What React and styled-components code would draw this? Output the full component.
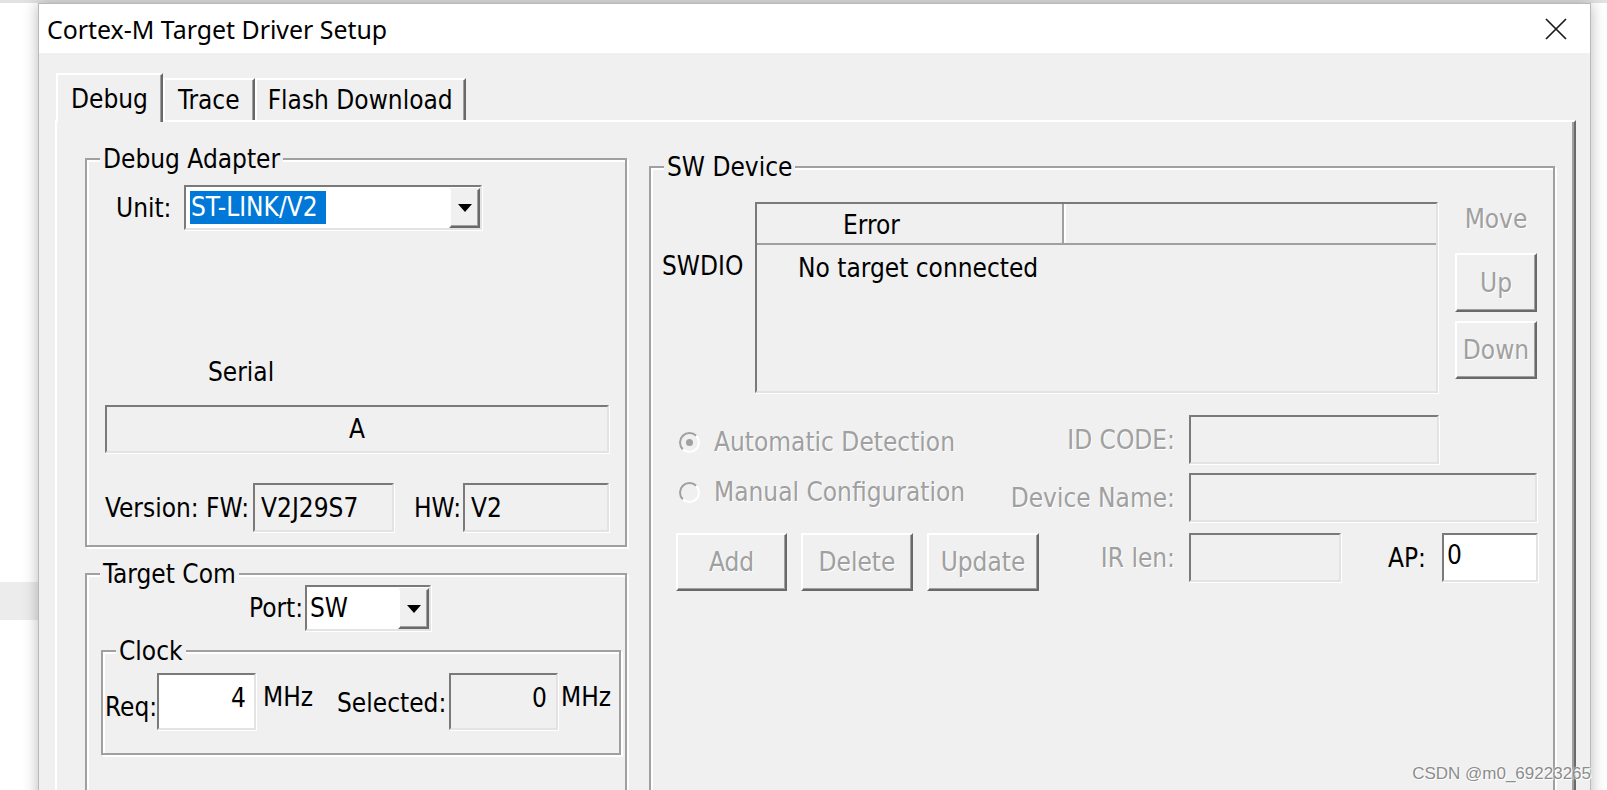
import styled, { createGlobalStyle } from "styled-components";

const GlobalStyle = createGlobalStyle`
  *, *::before, *::after { box-sizing: border-box; }
  html, body { margin: 0; padding: 0; overflow: hidden; background: #fff; }
  body {
    font-family: "DejaVu Sans Condensed", "DejaVu Sans", Tahoma, sans-serif;
    font-stretch: condensed;
    font-size: 26px;
    line-height: 30px;
    color: #000;
  }
`;

const Desktop = styled.div`
  position: relative;
  width: 1607px;
  height: 790px;
  overflow: hidden;
  padding: 3px 0 0 38px;
  background: linear-gradient(#e2e2e2 0 3px, #fff 3px);
  &::before {
    content: "";
    position: absolute;
    left: 0;
    top: 582px;
    width: 38px;
    height: 38px;
    background: #ececec;
  }
`;

const Window = styled.div`
  position: relative;
  width: 1553px;
  height: 880px;
  display: flex;
  flex-direction: column;
  background: #f0f0f0;
  border: 1px solid #b9b9b9;
  box-shadow: 0 0 14px rgba(0, 0, 0, 0.28);
`;

const TitleBar = styled.div`
  flex: none;
  height: 49px;
  display: flex;
  align-items: center;
  justify-content: space-between;
  padding: 0 23px 0 8px;
  background: #fff;
`;

const Title = styled.div`
  font-family: "Noto Sans", "Open Sans", sans-serif;
  font-stretch: normal;
  font-size: 24.9px;
`;

const Body = styled.div`
  flex: 1;
  display: flex;
  flex-direction: column;
  padding: 20px 14px 0 16px;
`;

const TabStrip = styled.div`
  flex: none;
  display: flex;
  align-items: flex-end;
  height: 47px;
  padding-left: 1px;
`;

const Tab = styled.div`
  position: relative;
  z-index: ${(p) => (p.$active ? 2 : 1)};
  height: ${(p) => (p.$active ? 49 : 42)}px;
  margin-bottom: ${(p) => (p.$active ? -2 : 0)}px;
  padding: 0 ${(p) => p.$pad || 13}px;
  display: flex;
  align-items: center;
  white-space: nowrap;
  background: #f0f0f0;
  border-top: 2px solid #fff;
  border-left: 2px solid #fff;
  border-right: 2px solid #696969;
  box-shadow: inset -1px 0 0 #a0a0a0;
`;

const Panel = styled.div`
  flex: 1;
  display: flex;
  align-items: flex-start;
  gap: 22px;
  padding: 0 17px 0 28px;
  border-top: 2px solid #fff;
  border-left: 2px solid #fff;
  border-right: 2px solid #696969;
  box-shadow: inset -2px 0 0 #a0a0a0;
`;

const Column = styled.div`
  flex: none;
  width: ${(p) => p.$w}px;
  margin-top: ${(p) => p.$top}px;
  display: flex;
  flex-direction: column;
`;

const Group = styled.div`
  position: relative;
  flex: none;
  border: 2px solid #a0a0a0;
  box-shadow: inset 2px 2px 0 #fff, 2px 2px 0 #fff;
  margin: ${(p) => p.$margin || "0"};
  padding: ${(p) => p.$pad || "0"};
  ${(p) => p.$h && `height: ${p.$h}px;`}
`;

const Legend = styled.span`
  position: absolute;
  top: -16px;
  left: 13px;
  padding: 0 3px;
  background: #f0f0f0;
  white-space: nowrap;
`;

const Row = styled.div`
  display: flex;
  align-items: ${(p) => p.$align || "center"};
  margin-top: ${(p) => p.$top || 0}px;
  padding-left: ${(p) => p.$left || 0}px;
`;

const Label = styled.span`
  flex: none;
  width: ${(p) => (p.$w ? `${p.$w}px` : "auto")};
  margin-top: ${(p) => p.$top || 0}px;
  margin-left: ${(p) => p.$left || 0}px;
  text-align: ${(p) => p.$align || "left"};
  white-space: nowrap;
  color: ${(p) => (p.$off ? "#a0a0a0" : "#000")};
  text-shadow: ${(p) => (p.$off ? "1px 1px 0 #fff" : "none")};
`;

const Field = styled.div`
  flex: none;
  display: flex;
  align-items: center;
  justify-content: ${(p) => p.$justify || "flex-start"};
  width: ${(p) => p.$w}px;
  height: ${(p) => p.$h}px;
  margin-left: ${(p) => p.$left || 0}px;
  padding: ${(p) => p.$pad || "0 6px"};
  background: ${(p) => (p.$white ? "#fff" : "#f0f0f0")};
  border: 2px solid;
  border-color: #7a7a7a #e3e3e3 #e3e3e3 #7a7a7a;
  box-shadow: 1px 1px 0 #fff;
  white-space: nowrap;
`;

const FieldText = styled.span`
  margin-top: ${(p) => p.$top || 0}px;
`;

const Selection = styled.span`
  margin-left: 2px;
  padding: 0 8px 0 1px;
  line-height: 33px;
  background: #0078d7;
  color: #fff;
`;

const DropButton = styled.div`
  flex: none;
  width: 31px;
  align-self: stretch;
  margin: 1px 0 0 auto;
  display: flex;
  align-items: center;
  justify-content: center;
  background: #f0f0f0;
  border: 2px solid;
  border-color: #f0f0f0 #696969 #696969 #fff;
  box-shadow: inset -1px -1px 0 #a0a0a0;
  &::after {
    content: "";
    border-left: 7px solid transparent;
    border-right: 7px solid transparent;
    border-top: 8px solid #000;
  }
`;

const ListView = styled.div`
  flex: none;
  width: 683px;
  height: 191px;
  display: flex;
  flex-direction: column;
  border: 2px solid;
  border-color: #7a7a7a #e3e3e3 #e3e3e3 #7a7a7a;
  box-shadow: 1px 1px 0 #fff;
`;

const ListHeader = styled.div`
  flex: none;
  display: flex;
  height: 41px;
  border-bottom: 2px solid #a0a0a0;
`;

const HeaderCell = styled.div`
  flex: ${(p) => (p.$w ? "none" : 1)};
  width: ${(p) => (p.$w ? `${p.$w}px` : "auto")};
  display: flex;
  align-items: center;
  padding-left: ${(p) => p.$pad || 0}px;
  padding-top: 3px;
  ${(p) => p.$w && "border-right: 2px solid #a0a0a0; box-shadow: 2px 0 0 #fff;"}
`;

const ListRow = styled.div`
  margin-top: 8px;
  padding-left: 41px;
`;

const MoveColumn = styled.div`
  flex: none;
  width: 82px;
  margin-left: 17px;
  display: flex;
  flex-direction: column;
  align-items: center;
`;

const Button = styled.div`
  flex: none;
  width: ${(p) => p.$w}px;
  height: ${(p) => p.$h}px;
  margin-top: ${(p) => p.$top || 0}px;
  display: flex;
  align-items: center;
  justify-content: center;
  background: #f0f0f0;
  border: 2px solid;
  border-color: #fff #696969 #696969 #fff;
  box-shadow: inset -1px -1px 0 #a0a0a0;
  color: #a0a0a0;
  text-shadow: 1px 1px 0 #fff;
`;

const ConfigGrid = styled.div`
  display: grid;
  grid-template-columns: 324px 161px 348px;
  grid-template-rows: 49px 49px 58px;
  column-gap: 14px;
  row-gap: 9px;
  margin: 22px 0 0 14px;
  & > :nth-child(n + 7) {
    margin-top: 2px;
  }
`;

const RadioLine = styled.div`
  align-self: start;
  display: flex;
  align-items: center;
  gap: 14px;
  padding: ${(p) => p.$top}px 0 0 3px;
  color: #a0a0a0;
  text-shadow: 1px 1px 0 #fff;
  white-space: nowrap;
`;

const Radio = styled.span`
  flex: none;
  width: 21px;
  height: 21px;
  border-radius: 50%;
  display: flex;
  align-items: center;
  justify-content: center;
  background: #f0f0f0;
  border: 2px solid;
  border-color: #a0a0a0 #fff #fff #a0a0a0;
  &::after {
    content: "";
    display: ${(p) => (p.$checked ? "block" : "none")};
    width: 7px;
    height: 7px;
    border-radius: 50%;
    background: #a0a0a0;
  }
`;

const GridLabel = styled.div`
  display: flex;
  align-items: center;
  justify-content: flex-end;
  height: 49px;
  color: #a0a0a0;
  text-shadow: 1px 1px 0 #fff;
  white-space: nowrap;
`;

const ButtonRow = styled.div`
  display: flex;
  gap: 14px;
`;

const InputRow = styled.div`
  display: flex;
  align-items: center;
  height: 49px;
`;

const Watermark = styled.div`
  position: absolute;
  right: 16px;
  bottom: 6px;
  font-family: "Liberation Sans", Arial, sans-serif;
  font-stretch: normal;
  font-size: 17px;
  line-height: 20px;
  color: #8c8c8c;
  text-shadow: 0 0 2px #fff, 1px 1px 0 #fff;
`;

const CloseIcon = () => (
  <svg width="22" height="22" viewBox="0 0 22 22">
    <path d="M1 1 L21 21 M21 1 L1 21" stroke="#1a1a1a" strokeWidth="1.7" fill="none" />
  </svg>
);

const App = () => {
  return (
    <Desktop>
      <GlobalStyle />
      <Window>
        <TitleBar>
          <Title>Cortex-M Target Driver Setup</Title>
          <CloseIcon />
        </TitleBar>
        <Body>
          <TabStrip>
            <Tab $active>Debug</Tab>
            <Tab>Trace</Tab>
            <Tab $pad={11}>Flash Download</Tab>
          </TabStrip>
          <Panel>
            <Column $w={542} $top={36}>
              <Group $pad="25px 0 13px 0">
                <Legend>Debug Adapter</Legend>
                <Row $left={29}>
                  <Label $w={68}>Unit:</Label>
                  <Field $w={298} $h={45} $white $pad="0 0 0 2px">
                    <Selection>ST-LINK/V2</Selection>
                    <DropButton />
                  </Field>
                </Row>
                <Row $top={127} $left={121}>
                  <Label>Serial</Label>
                </Row>
                <Row $top={18} $left={18}>
                  <Field $w={504} $h={48} $justify="center">
                    A
                  </Field>
                </Row>
                <Row $top={30} $left={18}>
                  <Label $w={148}>Version: FW:</Label>
                  <Field $w={141} $h={49}>
                    V2J29S7
                  </Field>
                  <Label $w={49} $left={20}>
                    HW:
                  </Label>
                  <Field $w={146} $h={49}>
                    V2
                  </Field>
                </Row>
              </Group>
              <Group $margin="26px 0 0 0" $pad="10px 0 0 0" $h={300}>
                <Legend>Target Com</Legend>
                <Row $left={162}>
                  <Label $w={56}>Port:</Label>
                  <Field $w={126} $h={46} $white $pad="0 0 0 3px">
                    SW
                    <DropButton />
                  </Field>
                </Row>
                <Group $margin="19px 4px 0 14px" $pad="21px 0 23px 2px">
                  <Legend>Clock</Legend>
                  <Row $align="flex-start">
                    <Label $w={52} $top={19}>
                      Req:
                    </Label>
                    <Field $w={99} $h={57} $white $justify="flex-end" $pad="0 8px 0 0">
                      <FieldText $top={-8}>4</FieldText>
                    </Field>
                    <Label $w={74} $left={7} $top={9}>
                      MHz
                    </Label>
                    <Label $w={112} $top={15}>
                      Selected:
                    </Label>
                    <Field $w={109} $h={57} $justify="flex-end" $pad="0 9px 0 0">
                      <FieldText $top={-8}>0</FieldText>
                    </Field>
                    <Label $left={3} $top={9}>
                      MHz
                    </Label>
                  </Row>
                </Group>
              </Group>
            </Column>

            <Column $w={906} $top={44}>
              <Group $pad="34px 16px 0 11px" $h={700}>
                <Legend>SW Device</Legend>
                <Row $align="flex-start">
                  <Label $w={93} $top={49}>
                    SWDIO
                  </Label>
                  <ListView>
                    <ListHeader>
                      <HeaderCell $w={307} $pad={86}>
                        Error
                      </HeaderCell>
                      <HeaderCell />
                    </ListHeader>
                    <ListRow>No target connected</ListRow>
                  </ListView>
                  <MoveColumn>
                    <Label $off $top={2}>
                      Move
                    </Label>
                    <Button $w={82} $h={59} $top={19}>
                      Up
                    </Button>
                    <Button $w={82} $h={58} $top={9}>
                      Down
                    </Button>
                  </MoveColumn>
                </Row>
                <ConfigGrid>
                  <RadioLine $top={12}>
                    <Radio $checked />
                    Automatic Detection
                  </RadioLine>
                  <GridLabel>ID CODE:</GridLabel>
                  <InputRow>
                    <Field $w={250} $h={49} />
                  </InputRow>
                  <RadioLine $top={4}>
                    <Radio />
                    Manual Configuration
                  </RadioLine>
                  <GridLabel>Device Name:</GridLabel>
                  <InputRow>
                    <Field $w={348} $h={49} />
                  </InputRow>
                  <ButtonRow>
                    <Button $w={111} $h={58}>
                      Add
                    </Button>
                    <Button $w={112} $h={58}>
                      Delete
                    </Button>
                    <Button $w={112} $h={58}>
                      Update
                    </Button>
                  </ButtonRow>
                  <GridLabel>IR len:</GridLabel>
                  <InputRow>
                    <Field $w={152} $h={49} />
                    <Label $left={47}>AP:</Label>
                    <Field $w={96} $h={49} $white $left={16} $pad="0 0 0 3px">
                      <FieldText $top={-6}>0</FieldText>
                    </Field>
                  </InputRow>
                </ConfigGrid>
              </Group>
            </Column>
          </Panel>
        </Body>
      </Window>
      <Watermark>CSDN @m0_69223265</Watermark>
    </Desktop>
  );
};

export default App;
